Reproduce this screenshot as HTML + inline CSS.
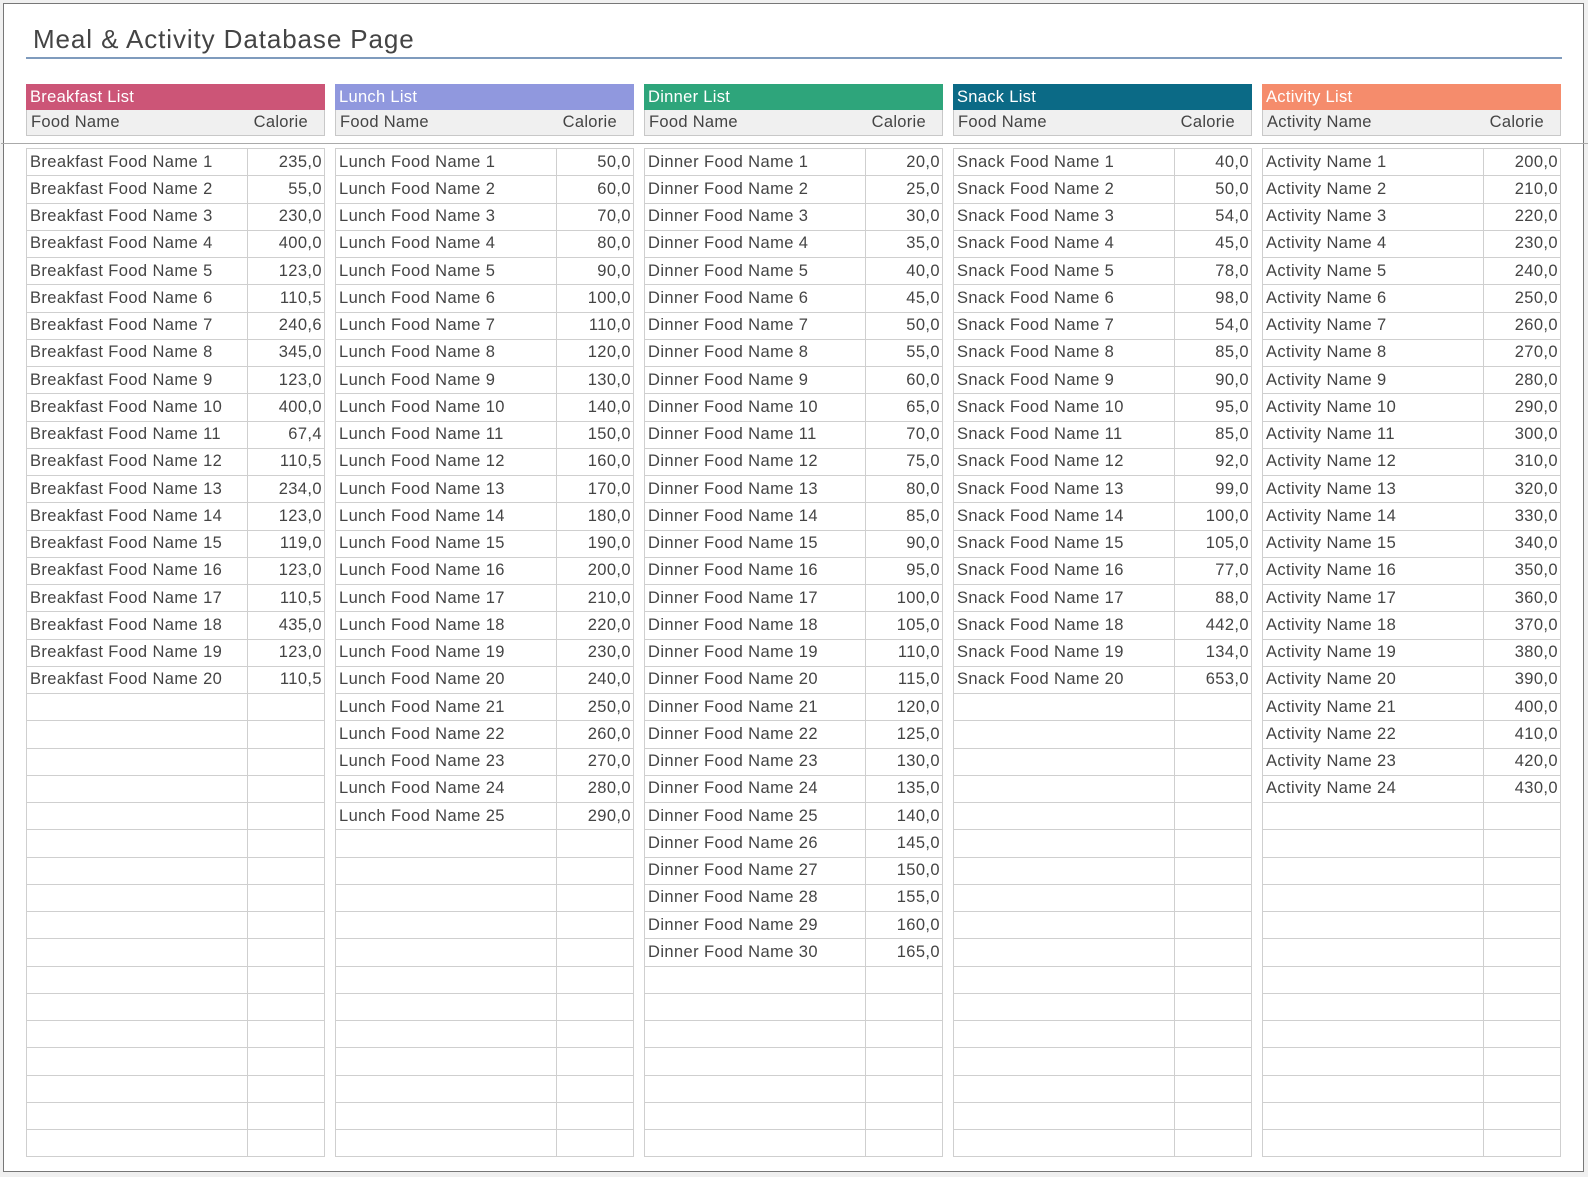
<!DOCTYPE html>
<html><head><meta charset="utf-8">
<style>
*{margin:0;padding:0;box-sizing:border-box}
html,body{width:1588px;height:1177px;background:#f0f0f0;overflow:hidden;font-family:"Liberation Sans",sans-serif;color:#444}
#page{position:absolute;left:3px;top:3px;width:1581px;height:1169px;background:#fff;border:1px solid #777}
h1{position:absolute;left:29px;top:20px;font-weight:normal;font-size:26px;color:#444;letter-spacing:0.9px}
#uline{position:absolute;left:22px;top:53px;width:1536px;height:2px;background:#7f9bbd}
#hline{position:absolute;left:-3px;top:139px;width:1588px;height:1px;background:#aaa}
.col{position:absolute;top:80px;width:299px}
.t{height:26px;color:#fff;font-size:16.5px;line-height:26px;padding-left:4px;letter-spacing:0.3px}
.s{height:26px;background:#f0f0f0;border:1px solid #c8c8c8;border-top:none;font-size:16.5px;line-height:24px;padding:0 16px 0 4px;display:flex;justify-content:space-between;letter-spacing:0.3px}
table{position:absolute;top:64px;left:0;width:299px;border-collapse:collapse;table-layout:fixed}
td{height:27.25px;border:1px solid #cfcfcf;font-size:16.5px;padding:0 3px;white-space:nowrap;overflow:hidden;letter-spacing:0.4px;line-height:25px}
td:nth-child(1){width:221px}
td:nth-child(2){text-align:right;padding-right:2px}
</style></head><body>
<div id="page">
<h1>Meal &amp; Activity Database Page</h1>
<div id="uline"></div>
<div id="hline"></div>

<div class="col" style="left:22px">
<div class="t" style="background:#cc5577">Breakfast List</div>
<div class="s"><span>Food Name</span><span>Calorie</span></div>
<table>
<tr><td>Breakfast Food Name 1</td><td>235,0</td></tr>
<tr><td>Breakfast Food Name 2</td><td>55,0</td></tr>
<tr><td>Breakfast Food Name 3</td><td>230,0</td></tr>
<tr><td>Breakfast Food Name 4</td><td>400,0</td></tr>
<tr><td>Breakfast Food Name 5</td><td>123,0</td></tr>
<tr><td>Breakfast Food Name 6</td><td>110,5</td></tr>
<tr><td>Breakfast Food Name 7</td><td>240,6</td></tr>
<tr><td>Breakfast Food Name 8</td><td>345,0</td></tr>
<tr><td>Breakfast Food Name 9</td><td>123,0</td></tr>
<tr><td>Breakfast Food Name 10</td><td>400,0</td></tr>
<tr><td>Breakfast Food Name 11</td><td>67,4</td></tr>
<tr><td>Breakfast Food Name 12</td><td>110,5</td></tr>
<tr><td>Breakfast Food Name 13</td><td>234,0</td></tr>
<tr><td>Breakfast Food Name 14</td><td>123,0</td></tr>
<tr><td>Breakfast Food Name 15</td><td>119,0</td></tr>
<tr><td>Breakfast Food Name 16</td><td>123,0</td></tr>
<tr><td>Breakfast Food Name 17</td><td>110,5</td></tr>
<tr><td>Breakfast Food Name 18</td><td>435,0</td></tr>
<tr><td>Breakfast Food Name 19</td><td>123,0</td></tr>
<tr><td>Breakfast Food Name 20</td><td>110,5</td></tr>
<tr><td></td><td></td></tr><tr><td></td><td></td></tr><tr><td></td><td></td></tr><tr><td></td><td></td></tr><tr><td></td><td></td></tr>
<tr><td></td><td></td></tr><tr><td></td><td></td></tr><tr><td></td><td></td></tr><tr><td></td><td></td></tr><tr><td></td><td></td></tr>
<tr><td></td><td></td></tr><tr><td></td><td></td></tr><tr><td></td><td></td></tr><tr><td></td><td></td></tr><tr><td></td><td></td></tr>
<tr><td></td><td></td></tr><tr><td></td><td></td></tr>
</table></div>

<div class="col" style="left:331px">
<div class="t" style="background:#9098de">Lunch List</div>
<div class="s"><span>Food Name</span><span>Calorie</span></div>
<table>
<tr><td>Lunch Food Name 1</td><td>50,0</td></tr>
<tr><td>Lunch Food Name 2</td><td>60,0</td></tr>
<tr><td>Lunch Food Name 3</td><td>70,0</td></tr>
<tr><td>Lunch Food Name 4</td><td>80,0</td></tr>
<tr><td>Lunch Food Name 5</td><td>90,0</td></tr>
<tr><td>Lunch Food Name 6</td><td>100,0</td></tr>
<tr><td>Lunch Food Name 7</td><td>110,0</td></tr>
<tr><td>Lunch Food Name 8</td><td>120,0</td></tr>
<tr><td>Lunch Food Name 9</td><td>130,0</td></tr>
<tr><td>Lunch Food Name 10</td><td>140,0</td></tr>
<tr><td>Lunch Food Name 11</td><td>150,0</td></tr>
<tr><td>Lunch Food Name 12</td><td>160,0</td></tr>
<tr><td>Lunch Food Name 13</td><td>170,0</td></tr>
<tr><td>Lunch Food Name 14</td><td>180,0</td></tr>
<tr><td>Lunch Food Name 15</td><td>190,0</td></tr>
<tr><td>Lunch Food Name 16</td><td>200,0</td></tr>
<tr><td>Lunch Food Name 17</td><td>210,0</td></tr>
<tr><td>Lunch Food Name 18</td><td>220,0</td></tr>
<tr><td>Lunch Food Name 19</td><td>230,0</td></tr>
<tr><td>Lunch Food Name 20</td><td>240,0</td></tr>
<tr><td>Lunch Food Name 21</td><td>250,0</td></tr>
<tr><td>Lunch Food Name 22</td><td>260,0</td></tr>
<tr><td>Lunch Food Name 23</td><td>270,0</td></tr>
<tr><td>Lunch Food Name 24</td><td>280,0</td></tr>
<tr><td>Lunch Food Name 25</td><td>290,0</td></tr>
<tr><td></td><td></td></tr><tr><td></td><td></td></tr><tr><td></td><td></td></tr><tr><td></td><td></td></tr><tr><td></td><td></td></tr>
<tr><td></td><td></td></tr><tr><td></td><td></td></tr><tr><td></td><td></td></tr><tr><td></td><td></td></tr><tr><td></td><td></td></tr>
<tr><td></td><td></td></tr><tr><td></td><td></td></tr>
</table></div>

<div class="col" style="left:640px">
<div class="t" style="background:#2ea57b">Dinner List</div>
<div class="s"><span>Food Name</span><span>Calorie</span></div>
<table>
<tr><td>Dinner Food Name 1</td><td>20,0</td></tr>
<tr><td>Dinner Food Name 2</td><td>25,0</td></tr>
<tr><td>Dinner Food Name 3</td><td>30,0</td></tr>
<tr><td>Dinner Food Name 4</td><td>35,0</td></tr>
<tr><td>Dinner Food Name 5</td><td>40,0</td></tr>
<tr><td>Dinner Food Name 6</td><td>45,0</td></tr>
<tr><td>Dinner Food Name 7</td><td>50,0</td></tr>
<tr><td>Dinner Food Name 8</td><td>55,0</td></tr>
<tr><td>Dinner Food Name 9</td><td>60,0</td></tr>
<tr><td>Dinner Food Name 10</td><td>65,0</td></tr>
<tr><td>Dinner Food Name 11</td><td>70,0</td></tr>
<tr><td>Dinner Food Name 12</td><td>75,0</td></tr>
<tr><td>Dinner Food Name 13</td><td>80,0</td></tr>
<tr><td>Dinner Food Name 14</td><td>85,0</td></tr>
<tr><td>Dinner Food Name 15</td><td>90,0</td></tr>
<tr><td>Dinner Food Name 16</td><td>95,0</td></tr>
<tr><td>Dinner Food Name 17</td><td>100,0</td></tr>
<tr><td>Dinner Food Name 18</td><td>105,0</td></tr>
<tr><td>Dinner Food Name 19</td><td>110,0</td></tr>
<tr><td>Dinner Food Name 20</td><td>115,0</td></tr>
<tr><td>Dinner Food Name 21</td><td>120,0</td></tr>
<tr><td>Dinner Food Name 22</td><td>125,0</td></tr>
<tr><td>Dinner Food Name 23</td><td>130,0</td></tr>
<tr><td>Dinner Food Name 24</td><td>135,0</td></tr>
<tr><td>Dinner Food Name 25</td><td>140,0</td></tr>
<tr><td>Dinner Food Name 26</td><td>145,0</td></tr>
<tr><td>Dinner Food Name 27</td><td>150,0</td></tr>
<tr><td>Dinner Food Name 28</td><td>155,0</td></tr>
<tr><td>Dinner Food Name 29</td><td>160,0</td></tr>
<tr><td>Dinner Food Name 30</td><td>165,0</td></tr>
<tr><td></td><td></td></tr><tr><td></td><td></td></tr><tr><td></td><td></td></tr><tr><td></td><td></td></tr><tr><td></td><td></td></tr>
<tr><td></td><td></td></tr><tr><td></td><td></td></tr>
</table></div>

<div class="col" style="left:949px">
<div class="t" style="background:#0b6a86">Snack List</div>
<div class="s"><span>Food Name</span><span>Calorie</span></div>
<table>
<tr><td>Snack Food Name 1</td><td>40,0</td></tr>
<tr><td>Snack Food Name 2</td><td>50,0</td></tr>
<tr><td>Snack Food Name 3</td><td>54,0</td></tr>
<tr><td>Snack Food Name 4</td><td>45,0</td></tr>
<tr><td>Snack Food Name 5</td><td>78,0</td></tr>
<tr><td>Snack Food Name 6</td><td>98,0</td></tr>
<tr><td>Snack Food Name 7</td><td>54,0</td></tr>
<tr><td>Snack Food Name 8</td><td>85,0</td></tr>
<tr><td>Snack Food Name 9</td><td>90,0</td></tr>
<tr><td>Snack Food Name 10</td><td>95,0</td></tr>
<tr><td>Snack Food Name 11</td><td>85,0</td></tr>
<tr><td>Snack Food Name 12</td><td>92,0</td></tr>
<tr><td>Snack Food Name 13</td><td>99,0</td></tr>
<tr><td>Snack Food Name 14</td><td>100,0</td></tr>
<tr><td>Snack Food Name 15</td><td>105,0</td></tr>
<tr><td>Snack Food Name 16</td><td>77,0</td></tr>
<tr><td>Snack Food Name 17</td><td>88,0</td></tr>
<tr><td>Snack Food Name 18</td><td>442,0</td></tr>
<tr><td>Snack Food Name 19</td><td>134,0</td></tr>
<tr><td>Snack Food Name 20</td><td>653,0</td></tr>
<tr><td></td><td></td></tr><tr><td></td><td></td></tr><tr><td></td><td></td></tr><tr><td></td><td></td></tr><tr><td></td><td></td></tr>
<tr><td></td><td></td></tr><tr><td></td><td></td></tr><tr><td></td><td></td></tr><tr><td></td><td></td></tr><tr><td></td><td></td></tr>
<tr><td></td><td></td></tr><tr><td></td><td></td></tr><tr><td></td><td></td></tr><tr><td></td><td></td></tr><tr><td></td><td></td></tr>
<tr><td></td><td></td></tr><tr><td></td><td></td></tr>
</table></div>

<div class="col" style="left:1258px">
<div class="t" style="background:#f58c6c">Activity List</div>
<div class="s"><span>Activity Name</span><span>Calorie</span></div>
<table>
<tr><td>Activity Name 1</td><td>200,0</td></tr>
<tr><td>Activity Name 2</td><td>210,0</td></tr>
<tr><td>Activity Name 3</td><td>220,0</td></tr>
<tr><td>Activity Name 4</td><td>230,0</td></tr>
<tr><td>Activity Name 5</td><td>240,0</td></tr>
<tr><td>Activity Name 6</td><td>250,0</td></tr>
<tr><td>Activity Name 7</td><td>260,0</td></tr>
<tr><td>Activity Name 8</td><td>270,0</td></tr>
<tr><td>Activity Name 9</td><td>280,0</td></tr>
<tr><td>Activity Name 10</td><td>290,0</td></tr>
<tr><td>Activity Name 11</td><td>300,0</td></tr>
<tr><td>Activity Name 12</td><td>310,0</td></tr>
<tr><td>Activity Name 13</td><td>320,0</td></tr>
<tr><td>Activity Name 14</td><td>330,0</td></tr>
<tr><td>Activity Name 15</td><td>340,0</td></tr>
<tr><td>Activity Name 16</td><td>350,0</td></tr>
<tr><td>Activity Name 17</td><td>360,0</td></tr>
<tr><td>Activity Name 18</td><td>370,0</td></tr>
<tr><td>Activity Name 19</td><td>380,0</td></tr>
<tr><td>Activity Name 20</td><td>390,0</td></tr>
<tr><td>Activity Name 21</td><td>400,0</td></tr>
<tr><td>Activity Name 22</td><td>410,0</td></tr>
<tr><td>Activity Name 23</td><td>420,0</td></tr>
<tr><td>Activity Name 24</td><td>430,0</td></tr>
<tr><td></td><td></td></tr><tr><td></td><td></td></tr><tr><td></td><td></td></tr><tr><td></td><td></td></tr><tr><td></td><td></td></tr>
<tr><td></td><td></td></tr><tr><td></td><td></td></tr><tr><td></td><td></td></tr><tr><td></td><td></td></tr><tr><td></td><td></td></tr>
<tr><td></td><td></td></tr><tr><td></td><td></td></tr><tr><td></td><td></td></tr>
</table></div>

</div>
</body></html>
